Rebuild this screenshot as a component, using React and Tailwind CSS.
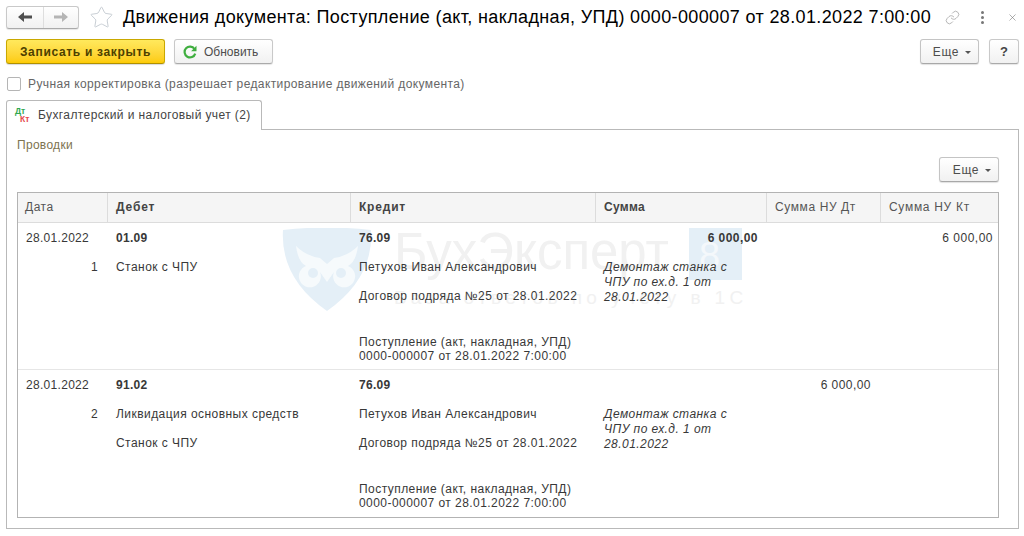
import { Star, Link, X } from "lucide-react";

const rows = [
  {
    date: "28.01.2022",
    num: "1",
    debit: "01.09",
    debitLines: ["Станок с ЧПУ"],
    sum: "6 000,00",
    nuDt: "",
    nuKt: "6 000,00",
  },
  {
    date: "28.01.2022",
    num: "2",
    debit: "91.02",
    debitLines: ["Ликвидация основных средств", "Станок с ЧПУ"],
    sum: "",
    nuDt: "6 000,00",
    nuKt: "",
  },
];

const columns = "grid grid-cols-[90px_243px_245px_171px_114px_118px]";

function MoreButton({ className }) {
  return (
    <button className={`flex items-center justify-end gap-[6px] pr-[7px] rounded-[3px] border border-[#c4c4c4] border-b-[#a8a8a8] bg-gradient-to-b from-white to-[#f1f1f1] text-[#4d4d4d] text-[12px] tracking-[0.6px] shadow-[0_1px_1px_rgba(0,0,0,0.12)] ${className}`}>
      Еще
      <span className="border-x-[3px] border-t-[3px] border-x-transparent border-t-[#555] mt-[2px]"></span>
    </button>
  );
}

function Watermark() {
  return (
    <div className="absolute left-[282px] top-[228px] w-[462px] h-[92px] pointer-events-none">
      <svg width="90" height="84" viewBox="0 0 90 84" className="absolute left-0 top-0">
        <path d="M1 2 Q45 -3 89 2 Q92 50 45 83 Q-2 50 1 2 Z" fill="#e4eff7" />
        <path d="M14 18 Q24 28 38 30 L45 36 L52 30 Q66 28 76 18 Q74 34 66 38 A11 11 0 1 1 52 44 L45 54 L38 44 A11 11 0 1 1 24 38 Q16 34 14 18 Z" fill="#f6fafc" />
        <circle cx="31" cy="45" r="5" fill="#e4eff7" />
        <circle cx="59" cy="45" r="5" fill="#e4eff7" />
      </svg>
      <span className="absolute left-[112px] top-[-4px] text-[51px] leading-[56px] text-[#f1f1f1] whitespace-nowrap">БухЭксперт</span>
      <div className="absolute left-[407px] top-0 w-[53px] h-[52px] bg-[#e4eff7] pl-[10px] pt-[6px] text-[38px] leading-[44px] text-[#f4f8fb]">8</div>
      <span className="absolute left-[112px] top-[60px] text-[19px] leading-[20px] tracking-[4.4px] text-[#f1f1f1] whitespace-nowrap">База ответов по учету в 1С</span>
    </div>
  );
}

function Row({ row, last }) {
  return (
    <div className={`${columns} h-[147px] pt-[1px] text-[12px] tracking-[0.45px] text-[#383838] ${last ? "" : "border-b border-[#e6e6e6]"}`}>
      <div className="pl-[8px] pr-[10px] tracking-[0.3px]">
        <div className="h-[29px] leading-[29px]">{row.date}</div>
        <div className="h-[29px] leading-[29px] text-right">{row.num}</div>
      </div>
      <div className="pl-[8px]">
        <div className="h-[29px] leading-[29px] font-bold tracking-[0.3px]">{row.debit}</div>
        {row.debitLines.map((line) => (
          <div key={line} className="h-[29px] leading-[29px]">{line}</div>
        ))}
      </div>
      <div className="pl-[8px]">
        <div className="h-[29px] leading-[29px] font-bold tracking-[0.3px]">76.09</div>
        <div className="h-[29px] leading-[29px]">Петухов Иван Александрович</div>
        <div className="h-[29px] leading-[29px]">Договор подряда №25 от 28.01.2022</div>
        <div className="mt-[24px] leading-[14px]">
          Поступление (акт, накладная, УПД)
          <br />
          0000-000007 от 28.01.2022 7:00:00
        </div>
      </div>
      <div className="pl-[8px] pr-[9px]">
        <div className="h-[29px] leading-[29px] font-bold text-right tracking-[0.45px]">{row.sum}</div>
        <div className="mt-[7px] leading-[15px] italic w-[140px]">Демонтаж станка с ЧПУ по ех.д. 1 от 28.01.2022</div>
      </div>
      <div className="pr-[10px] h-[29px] leading-[29px] text-right tracking-[0.45px]">{row.nuDt}</div>
      <div className="pr-[6px] h-[29px] leading-[29px] text-right tracking-[0.5px]">{row.nuKt}</div>
    </div>
  );
}

export default function App() {
  return (
    <div className="relative w-[1024px] h-[536px] bg-white overflow-hidden font-['Liberation_Sans',Arial,sans-serif] text-[#333]">
      <Watermark />

      {/* title bar */}
      <div className="flex items-center h-[22px] mt-[6px] ml-[6px]">
        <div className="flex w-[73px] h-[23px] rounded-[3px] border border-[#c9c9c9] border-b-[#aaa] bg-gradient-to-b from-white to-[#f1f1f1] shadow-[0_1px_1px_rgba(0,0,0,0.1)]">
          <div className="w-[37px] flex items-center justify-center border-r border-[#dedede]">
            <svg width="14" height="10" viewBox="0 0 14 10">
              <path d="M0 5 L6 0 V3.5 H14 V6.5 H6 V10 Z" fill="#4f4f4f" />
            </svg>
          </div>
          <div className="flex-1 flex items-center justify-center">
            <svg width="14" height="10" viewBox="0 0 14 10">
              <path d="M14 5 L8 0 V3.5 H0 V6.5 H8 V10 Z" fill="#b5b5b5" />
            </svg>
          </div>
        </div>
        <Star size={25} strokeWidth={0.9} className="ml-[10px] text-[#c4cbd1]" />
        <h1 className="ml-[9px] text-[18px] leading-[22px] tracking-[0.36px] text-black whitespace-nowrap">
          Движения документа: Поступление (акт, накладная, УПД) 0000-000007 от 28.01.2022 7:00:00
        </h1>
        <Link size={15} strokeWidth={1.3} className="ml-[14px] text-[#a5a5a5]" />
        <div className="ml-[21px] flex flex-col gap-[2px]">
          <span className="w-[3px] h-[3px] bg-[#777] rounded-full"></span>
          <span className="w-[3px] h-[3px] bg-[#777] rounded-full"></span>
          <span className="w-[3px] h-[3px] bg-[#777] rounded-full"></span>
        </div>
        <X size={11} strokeWidth={1.3} className="ml-[23px] text-[#777]" />
      </div>

      {/* command bar */}
      <div className="flex items-center h-[25px] mt-[11px] mx-[6px]">
        <button className="w-[159px] h-[25px] rounded-[3px] border border-[#c9a800] border-b-[#b09000] bg-gradient-to-b from-[#ffe95c] to-[#fdcb00] text-[12px] font-bold tracking-[0.68px] text-[#4d4000] shadow-[0_1px_1px_rgba(0,0,0,0.15)]">
          Записать и закрыть
        </button>
        <button className="ml-[9px] w-[99px] h-[25px] flex items-center pl-[8px] gap-[7px] rounded-[3px] border border-[#c9c9c9] border-b-[#aaa] bg-gradient-to-b from-white to-[#f1f1f1] text-[12px] text-[#4d4d4d] shadow-[0_1px_1px_rgba(0,0,0,0.1)]">
          <svg width="14" height="14" viewBox="0 0 14 14" fill="none">
            <path d="M11.5 4 A5.4 5.4 0 1 0 12.2 8.6" stroke="#3fae3f" strokeWidth="2.2" />
            <path d="M13.5 0.8 V6.2 H8.1 Z" fill="#3fae3f" />
          </svg>
          Обновить
        </button>
        <MoreButton className="ml-auto w-[59px] h-[25px]" />
        <button className="ml-[10px] mr-[-1px] w-[30px] h-[25px] rounded-[3px] border border-[#c9c9c9] border-b-[#aaa] bg-gradient-to-b from-white to-[#f1f1f1] text-[13px] font-bold text-[#444] shadow-[0_1px_1px_rgba(0,0,0,0.1)]">
          ?
        </button>
      </div>

      {/* manual edit */}
      <label className="flex items-center h-[15px] mt-[12px] ml-[7px] text-[12px] tracking-[0.4px] text-[#666]">
        <span className="w-[14px] h-[14px] rounded-[2px] border border-[#b5b5b5] bg-white"></span>
        <span className="ml-[7px]">Ручная корректировка (разрешает редактирование движений документа)</span>
      </label>

      {/* tabs */}
      <div className="relative z-10 flex items-center mt-[9px] ml-[6px] w-[256px] h-[30px] pl-[8px] pb-[2px] gap-[7px] rounded-t-[3px] border border-b-0 border-[#b9b9b9] bg-white">
        <span className="flex flex-col w-[16px] text-[8.5px] leading-[8px] font-bold">
          <span className="text-[#2fa84f]">Дт</span>
          <span className="text-[#e5484d] pl-[5px]">Кт</span>
        </span>
        <span className="text-[12px] tracking-[0.4px] text-[#444] whitespace-nowrap">Бухгалтерский и налоговый учет (2)</span>
      </div>

      {/* panel */}
      <div className="relative -mt-[1px] ml-[6px] w-[1013px] h-[400px] border border-[#b9b9b9] pt-[8px] pl-[10px]">
        <div className="text-[12px] leading-[15px] tracking-[0.3px] text-[#7d7350]">Проводки</div>
        <div className="flex justify-end w-[982px] mt-[4px]">
          <MoreButton className="w-[60px] h-[25px]" />
        </div>
        <div className="w-[982px] h-[326px] mt-[10px] border border-[#b3b3b3]">
          <div className={`${columns} h-[30px] bg-[#f5f5f5] border-b border-[#dcdcdc] text-[12px] leading-[29px] text-[#555]`}>
            <div className="pl-[7px] border-r border-[#dcdcdc] tracking-[0.5px]">Дата</div>
            <div className="pl-[8px] border-r border-[#dcdcdc] font-bold tracking-[0.85px] text-[#444]">Дебет</div>
            <div className="pl-[8px] border-r border-[#dcdcdc] font-bold tracking-[0.8px] text-[#444]">Кредит</div>
            <div className="pl-[8px] border-r border-[#dcdcdc] font-bold tracking-[0.3px] text-[#444]">Сумма</div>
            <div className="pl-[8px] border-r border-[#dcdcdc] tracking-[0.6px]">Сумма НУ Дт</div>
            <div className="pl-[8px] tracking-[0.7px]">Сумма НУ Кт</div>
          </div>
          {rows.map((row, i) => (
            <Row key={row.num} row={row} last={i === rows.length - 1} />
          ))}
        </div>
      </div>
    </div>
  );
}
